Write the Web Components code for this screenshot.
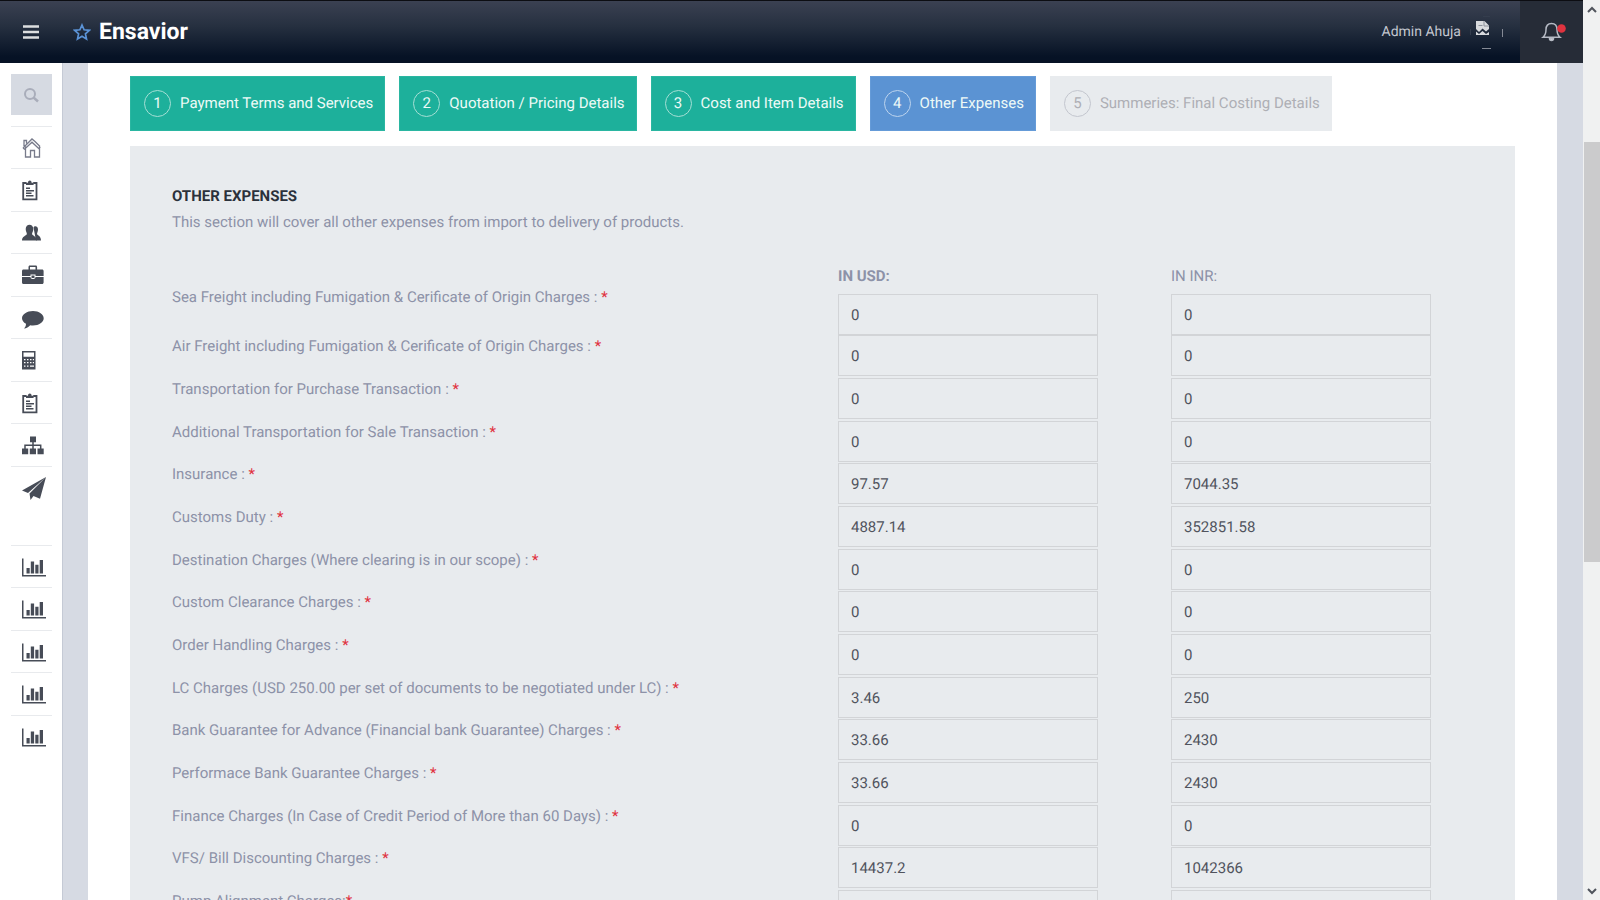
<!DOCTYPE html>
<html lang="en">
<head>
    <meta charset="UTF-8">
    <meta name="viewport" content="width=device-width, initial-scale=1.0">
    <title>Ensavior - Other Expenses</title>
    <style>
        * {
            box-sizing: border-box;
        }

        body {
            margin: 0;
            height: 100vh;
            overflow: hidden;
            display: flex;
            background: #d6dae3;
            color: #8d92a8;
            font: 15px/22px Roboto, "Liberation Sans", sans-serif;
            text-rendering: geometricPrecision;
        }

        .app {
            flex: 1;
            min-width: 0;
            display: flex;
            flex-direction: column;
        }

        .columns {
            flex: 1;
            min-height: 0;
            display: flex;
        }

        main {
            flex: 1;
            min-width: 0;
            overflow: hidden;
            margin: 0 26px 0 25px;
            padding: 13px 42px 0;
            background: #fff;
        }

        .steps {
            display: flex;
            gap: 14px;
            margin-bottom: 15px;
        }

        .rows {
            display: grid;
            grid-template-rows: 70px;
            grid-auto-rows: 43px 43px 42px;
        }
    </style>
</head>
<body>

<div class="app">
    <app-header user="Admin Ahuja">Ensavior</app-header>
    <div class="columns">
        <side-nav></side-nav>
        <main>
            <nav class="steps" aria-label="Steps">
                <wizard-step number="1" state="done">Payment Terms and Services</wizard-step>
                <wizard-step number="2" state="done">Quotation / Pricing Details</wizard-step>
                <wizard-step number="3" state="done">Cost and Item Details</wizard-step>
                <wizard-step number="4" state="current">Other Expenses</wizard-step>
                <wizard-step number="5" state="disabled">Summeries: Final Costing Details</wizard-step>
            </nav>
            <form-panel>
                <span slot="title">OTHER EXPENSES</span>
                <span slot="description">This section will cover all other expenses from import to delivery of products.</span>
                <div class="rows">
                    <expense-row headings usd="0" inr="0">Sea Freight including Fumigation &amp; Cerificate of Origin Charges : </expense-row>
                    <expense-row usd="0" inr="0">Air Freight including Fumigation &amp; Cerificate of Origin Charges : </expense-row>
                    <expense-row usd="0" inr="0">Transportation for Purchase Transaction : </expense-row>
                    <expense-row usd="0" inr="0">Additional Transportation for Sale Transaction : </expense-row>
                    <expense-row usd="97.57" inr="7044.35">Insurance : </expense-row>
                    <expense-row usd="4887.14" inr="352851.58">Customs Duty : </expense-row>
                    <expense-row usd="0" inr="0">Destination Charges (Where clearing is in our scope) : </expense-row>
                    <expense-row usd="0" inr="0">Custom Clearance Charges : </expense-row>
                    <expense-row usd="0" inr="0">Order Handling Charges : </expense-row>
                    <expense-row usd="3.46" inr="250">LC Charges (USD 250.00 per set of documents to be negotiated under LC) : </expense-row>
                    <expense-row usd="33.66" inr="2430">Bank Guarantee for Advance (Financial bank Guarantee) Charges : </expense-row>
                    <expense-row usd="33.66" inr="2430">Performace Bank Guarantee Charges : </expense-row>
                    <expense-row usd="0" inr="0">Finance Charges (In Case of Credit Period of More than 60 Days) : </expense-row>
                    <expense-row usd="14437.2" inr="1042366">VFS/ Bill Discounting Charges : </expense-row>
                    <expense-row usd="" inr="">Pump Alignment Charges:</expense-row>
                </div>
            </form-panel>
        </main>
    </div>
</div>
<page-scrollbar></page-scrollbar>

<script>
    // Attach an open shadow root and fill it
    function render(element, html) {
        element.attachShadow({ mode: 'open' }).innerHTML =
            '<style>* { box-sizing: border-box; }</style>' + html;
    }

    class AppHeader extends HTMLElement {
        constructor() {
            super();
            render(this, `
                <style>
                    :host {
                        display: block;
                    }
                    header {
                        display: flex;
                        align-items: center;
                        height: 63px;
                        border-top: 1px solid #0c0d12;
                        background: linear-gradient(#3b4152, #263040 40%, #061225 90%);
                        color: #c3c6cf;
                    }
                    button {
                        border: 0;
                        padding: 0;
                        background: none;
                        display: flex;
                        cursor: pointer;
                    }
                    svg {
                        display: block;
                    }
                    .menu {
                        margin-left: 23px;
                    }
                    .brand {
                        display: flex;
                        align-items: center;
                        gap: 8px;
                        flex: 1;
                        margin-left: 34px;
                        color: #fff;
                        font-size: 23px;
                        line-height: 24px;
                        font-weight: 700;
                        text-decoration: none;
                    }
                    .user {
                        font-size: 14px;
                    }
                    .avatar {
                        margin: 0 14px 0 7px;
                    }
                    .alerts {
                        width: 63px;
                        height: 100%;
                        align-items: center;
                        justify-content: center;
                        background: #262c37;
                    }
                </style>
                <header>
                    <button class="menu" type="button" aria-label="Toggle menu">
                        <svg width="16" height="14" stroke="#dcdedf" stroke-width="2.500"><path d="M0 1.500h16M0 7h16M0 12.500h16"/></svg>
                    </button>
                    <a class="brand" href="#">
                        <svg width="18" height="18" viewBox="0 0 18 18" fill="none" stroke="#5b93d6" stroke-width="1.7"><path d="M9 2l2.1 4.8 5.2.5-3.9 3.5 1.1 5.1L9 13.2l-4.500 2.700 1.100-5.100L1.700 7.300l5.200-.5z"/></svg>
                        <slot></slot>
                    </a>
                    <span class="user"></span>
                    <svg class="avatar" width="38" height="38" viewBox="0 0 38 38" aria-hidden="true">
                        <path d="M8 8h8.500l4.500 4.500v3.500l-3 2.500-3.500-3-3.500 3.500L8 16z" fill="#d9dbde"/>
                        <path d="M16 8v5h5M10.500 12.500h4" fill="none" stroke="#8d929c"/>
                        <path d="M8 18.500l3 2.500 3.500-3 3.500 3 3-2V22H8z" fill="#d9dbde"/>
                        <path d="M34.500 16v8M14 35.500h9" stroke="#858a95" fill="none"/>
                        <path d="M2.500 16v6M15 3.500h7" stroke="#343d4d" fill="none"/>
                    </svg>
                    <button class="alerts" type="button" aria-label="Notifications">
                        <svg width="20" height="20" viewBox="0 0 20 20" overflow="visible" fill="none" stroke="#b5bac4" stroke-width="1.500">
                            <path d="M9.500 1.500c-3.600 0-5.500 2.500-5.500 6 0 4-1 6-3 7.700h17c-2-1.700-3-3.700-3-7.700 0-3.500-1.900-6-5.500-6z"/>
                            <path d="M7.500 16.500a2 2 0 0 0 4 0z" fill="#dfe2e8"/>
                            <circle cx="19.500" cy="6.500" r="4.300" fill="#e0333f" stroke="none"/>
                        </svg>
                    </button>
                </header>
            `);
            this.shadowRoot.querySelector('.user').textContent = this.getAttribute('user');
        }
    }

    // Icon drawings, all in a 24x24 box
    const ICONS = {
        home: '<path d="M1 10L10 1l3 2.500 5 5M3.500 8.500V19h5v-6.500h4V19h5V8.500M1 10l1.500 1.200L10 4.200l7 6.500 1.200-1.700M2 8V2.500h2.500v3" fill="none" stroke="#787b8b" stroke-width="1.300"/>',
        clipboard: '<path d="M4.500 3H1.200v16.300h13.300V3h-3.300" fill="none" stroke="#474c57" stroke-width="1.800"/><path d="M4 5V2.800h2c0-3 3.600-3 3.600 0h2V5zM4 7.500h4v1.400H4zM4 10h8v1.400H4zM4 12.500h5.500v1.400H4zM4 15h7.500v1.400H4z"/>',
        users: '<path d="M11.500 4.500C12.300 2.300 16 2.700 16 6.500c0 2-.9 3-1 4.500.5 1.800 4 1.700 4 6.500h-5z"/><path d="M3.700 6C3.700.2 11.300.2 11.300 6c0 2.500-1 3.300-1.300 5 .8 2.200 4.800 2 4.800 6.500H0c0-4.500 4-4.300 4.900-6.500-.2-1.700-1.200-2.500-1.200-5z"/>',
        briefcase: '<path d="M6.500 4.500V2c0-.8.500-1.500 1.300-1.500h6c.8 0 1.300.7 1.300 1.500v2.500h5c.9 0 1.500.6 1.500 1.500v5H13.500V9.500h-5V11H0V6c0-.9.600-1.500 1.500-1.500zM8 4.500h5.500V2H8zM0 12h8.500c0 2.700 5 2.700 5 0h8.100v5.500c0 .9-.6 1.500-1.500 1.500H1.500C.6 19 0 18.400 0 17.500z"/><path d="M9.500 10.500h3V13h-3z"/>',
        comment: '<path d="M11 3c6 0 10.700 3.300 10.700 7.300S17 17.500 11 17.500c-1 0-2-.1-2.800-.3C6.500 19 4.500 20.200 2 20.500c1.300-1.300 2-2.500 2-4.700C1.500 14.500 0 12.500 0 10.300c0-4 5-7.300 11-7.300z"/>',
        calculator: '<path fill-rule="evenodd" d="M0 1h13.500v18.500H0zM1.500 2.500v4.300H12V2.500zM2 9v1.300h1.500V9zm3 0v1.300h1.500V9zm3 0v1.300h1.500V9zm2.800 0v1.300H12V9zM2 12v1.300h1.500V12zm3 0v1.300h1.500V12zm3 0v1.300h1.500V12zm2.800 0v1.300H12V12zM2 15.500v1.300h1.500v-1.300zm3 0v1.300h1.500v-1.300zm3 0v1.300h4v-1.300z"/>',
        sitemap: '<path d="M8 1.500h6v5.700H8zM0 13.500h6.200v5.800H0zM7.800 13.500H14v5.800H7.800zM15.500 13.500h6.200v5.800h-6.200z"/><path d="M11 6v8M3 14v-3.700h15.700V14" fill="none" stroke="#474c57" stroke-width="1.500"/>',
        plane: '<path d="M24-1L0 12.500l6 2.500zM24-1L7.500 15.500 8.500 22l3-4 6.500 2.700z"/>',
        chart: '<path d="M0 1.500h1.500V18H24v1.500H0zM4.500 11h3.200v5.500H4.500zM8.800 4.500h3.300v12H8.800zM13.300 7.800h3.200v8.700h-3.200zM17.700 3H21v13.500h-3.300z"/>'
    };

    class SideNav extends HTMLElement {
        constructor() {
            super();
            const link = ([icon, label]) => `
                <li><a href="#" aria-label="${label}">
                    <svg width="24" height="24" viewBox="0 -2 24 24" fill="#474c57">${ICONS[icon]}</svg>
                </a></li>`;
            const modules = [
                ['home', 'Home'], ['clipboard', 'Enquiries'], ['users', 'Customers'],
                ['briefcase', 'Business'], ['comment', 'Messages'], ['calculator', 'Costing'],
                ['clipboard', 'Orders'], ['sitemap', 'Organisation'], ['plane', 'Dispatch']
            ];
            const reports = [1, 2, 3, 4, 5].map(n => ['chart', 'Report ' + n]);
            render(this, `
                <style>
                    :host {
                        display: block;
                        width: 63px;
                        padding: 11px 10px 0 11px;
                        background: #fff;
                        border-right: 1px solid #c5cad5;
                    }
                    button {
                        display: flex;
                        align-items: center;
                        justify-content: center;
                        width: 100%;
                        height: 41px;
                        border: 0;
                        padding: 0;
                        background: #d6dae2;
                        cursor: pointer;
                    }
                    ul {
                        display: grid;
                        grid-auto-rows: 42px 43px;
                        list-style: none;
                        margin: 11px 0 37px;
                        padding: 0;
                    }
                    .reports {
                        margin: 0;
                    }
                    li {
                        border-top: 1px solid #e8eaed;
                    }
                    a {
                        display: flex;
                        align-items: center;
                        height: 42px;
                        padding-left: 11px;
                    }
                </style>
                <button type="button" aria-label="Search">
                    <svg width="16" height="16" viewBox="1 0 16 16" fill="none" stroke="#a9adba" stroke-width="2"><circle cx="7" cy="7" r="5"/><path d="M10.500 10.500L15 14.500" stroke-width="2.500"/></svg>
                </button>
                <nav>
                    <ul>${modules.map(link).join('')}</ul>
                    <ul class="reports">${reports.map(link).join('')}</ul>
                </nav>
            `);
        }
    }

    class WizardStep extends HTMLElement {
        constructor() {
            super();
            render(this, `
                <style>
                    :host {
                        display: block;
                    }
                    button {
                        display: flex;
                        align-items: center;
                        gap: 9px;
                        height: 55px;
                        padding: 0 11px 1px 13px;
                        border: 1px solid #2ab6a1;
                        background: #1db09b;
                        color: #eefaf7;
                        font: inherit;
                        text-rendering: inherit;
                        white-space: nowrap;
                        cursor: pointer;
                    }
                    .number {
                        width: 27px;
                        height: 27px;
                        border: 1px solid #a5dfd5;
                        border-radius: 50%;
                        line-height: 25px;
                    }
                    :host([state="current"]) button {
                        background: #5b93d3;
                        border-color: #659bd8;
                    }
                    :host([state="current"]) .number {
                        border-color: #bdd4ee;
                    }
                    :host([state="disabled"]) button {
                        background: #e8ebee;
                        border-color: #e8ebee;
                        color: #aeafb5;
                    }
                    :host([state="disabled"]) .number {
                        border-color: #c3c6ce;
                    }
                </style>
                <button type="button"><span class="number"></span><span><slot></slot></span></button>
            `);
            this.shadowRoot.querySelector('.number').textContent = this.getAttribute('number');
            this.shadowRoot.querySelector('button').disabled = this.getAttribute('state') === 'disabled';
        }
    }

    class FormPanel extends HTMLElement {
        constructor() {
            super();
            render(this, `
                <style>
                    :host {
                        display: block;
                        padding: 39px 11px 39px 42px;
                        background: #e8ebee;
                    }
                    h2 {
                        margin: 0 0 4px;
                        color: #2b313b;
                        font-size: 15px;
                        line-height: 22px;
                        font-weight: 700;
                    }
                    p {
                        margin: 0 0 32px;
                    }
                </style>
                <h2><slot name="title"></slot></h2>
                <p><slot name="description"></slot></p>
                <slot></slot>
            `);
        }
    }

    class ExpenseRow extends HTMLElement {
        constructor() {
            super();
            const headings = this.hasAttribute('headings');
            render(this, `
                <style>
                    :host {
                        display: grid;
                        grid-template-columns: 2fr 1fr 1fr;
                        align-items: start;
                    }
                    :host([headings]) .name {
                        padding-top: 21px;
                    }
                    .heading {
                        margin-bottom: 7px;
                    }
                    .usd {
                        font-weight: 700;
                    }
                    .required {
                        color: #e0323f;
                    }
                    .name {
                        white-space: pre-wrap;
                    }
                    input {
                        display: block;
                        width: 78%;
                        height: 41px;
                        padding: 0 12px;
                        border: 1px solid #d2d4d7;
                        border-radius: 0;
                        background: transparent;
                        color: #50535d;
                        font: inherit;
                        text-rendering: inherit;
                    }
                </style>
                <label class="name" for="usd"><slot></slot><span class="required">*</span></label>
                <div>
                    ${headings ? '<div class="heading usd">IN USD:</div>' : ''}
                    <input id="usd" type="text">
                </div>
                <div>
                    ${headings ? '<div class="heading">IN INR:</div>' : ''}
                    <input id="inr" type="text">
                </div>
            `);
            const name = this.textContent.replace(/\s*:\s*$/, '');
            const usd = this.shadowRoot.getElementById('usd');
            const inr = this.shadowRoot.getElementById('inr');
            usd.value = this.getAttribute('usd');
            inr.value = this.getAttribute('inr');
            inr.setAttribute('aria-label', name + ' in INR');
        }
    }

    class PageScrollbar extends HTMLElement {
        constructor() {
            super();
            render(this, `
                <style>
                    :host {
                        display: flex;
                        flex-direction: column;
                        width: 17px;
                        padding-left: 1px;
                        background: #f0f1f1;
                    }
                    svg {
                        display: block;
                        margin: 0 auto;
                    }
                    .before {
                        flex: 124;
                    }
                    .thumb {
                        flex: 420;
                        background: #cbcbcc;
                    }
                    .after {
                        flex: 320;
                    }
                </style>
                <svg width="16" height="18" fill="none" stroke="#50545c" stroke-width="2"><path d="M4 12l4-4 4 4"/></svg>
                <div class="before"></div>
                <div class="thumb"></div>
                <div class="after"></div>
                <svg width="16" height="18" fill="none" stroke="#50545c" stroke-width="2"><path d="M4 7l4 4 4-4"/></svg>
            `);
        }
    }

    customElements.define('app-header', AppHeader);
    customElements.define('side-nav', SideNav);
    customElements.define('wizard-step', WizardStep);
    customElements.define('form-panel', FormPanel);
    customElements.define('expense-row', ExpenseRow);
    customElements.define('page-scrollbar', PageScrollbar);
</script>

</body>
</html>
